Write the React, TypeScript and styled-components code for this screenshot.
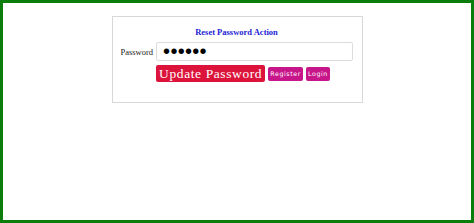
import React from "react";
import styled, { createGlobalStyle } from "styled-components";

const Global = createGlobalStyle`
  html, body { margin: 0; padding: 0; background: #fff; }
  body { font-family: "Liberation Serif", "Times New Roman", serif; }
  * { box-sizing: border-box; }
`;

const Frame = styled.div`
  height: 223px;
  border: 3px solid #0b7d0b;
  padding-top: 13px;
  display: flex;
  justify-content: center;
  align-items: flex-start;
`;

const Card = styled.form`
  width: 251px;
  border: 1px solid #d8d8d8;
  padding: 10px 9px 20px 8px;
  display: grid;
  grid-template-columns: auto 1fr;
  column-gap: 3px;
  row-gap: 4px;
  align-items: center;
`;

const Title = styled.h3`
  grid-column: 1 / -1;
  margin: 0 0 1px;
  text-align: center;
  color: #2323d6;
  font-size: 8.5px;
  font-weight: bold;
  font-family: "Liberation Serif", serif;
`;

const Label = styled.label`
  font-size: 8.5px;
  color: #222;
  text-align: right;
`;

const Input = styled.input`
  height: 19px;
  width: 100%;
  border: 1px solid #dcdcdc;
  border-radius: 2px;
  padding: 0 6px;
  font-size: 20px;
  color: #000;
  font-family: "Liberation Sans", sans-serif;
  letter-spacing: 0.3px;
  outline: none;
`;

const Actions = styled.div`
  grid-column: 2;
  display: flex;
  align-items: center;
  gap: 3px;
`;

const Button = styled.button<{ $tone: "primary" | "secondary" }>`
  border: none;
  border-radius: 2px;
  color: #fff;
  cursor: pointer;
  ${(p) =>
    p.$tone === "primary"
      ? `
    background: #dc143c;
    font-family: "Liberation Serif", serif;
    font-size: 13.5px;
    letter-spacing: 0.6px;
    height: 17px;
    padding: 0 3px;
    line-height: 17px;
  `
      : `
    background: #c7158a;
    font-family: "DejaVu Sans", sans-serif;
    font-size: 6.3px;
    letter-spacing: 0.6px;
    height: 14px;
    padding: 0 2px;
    line-height: 14px;
  `}
`;

export default function App() {
  return (
    <>
      <Global />
      <Frame>
        <Card onSubmit={(e) => e.preventDefault()}>
          <Title>Reset Password Action</Title>
          <Label htmlFor="pw">Password</Label>
          <Input id="pw" type="password" defaultValue="123456" />
          <Actions>
            <Button $tone="primary">Update Password</Button>
            <Button $tone="secondary" type="button">Register</Button>
            <Button $tone="secondary" type="button">Login</Button>
          </Actions>
        </Card>
      </Frame>
    </>
  );
}
